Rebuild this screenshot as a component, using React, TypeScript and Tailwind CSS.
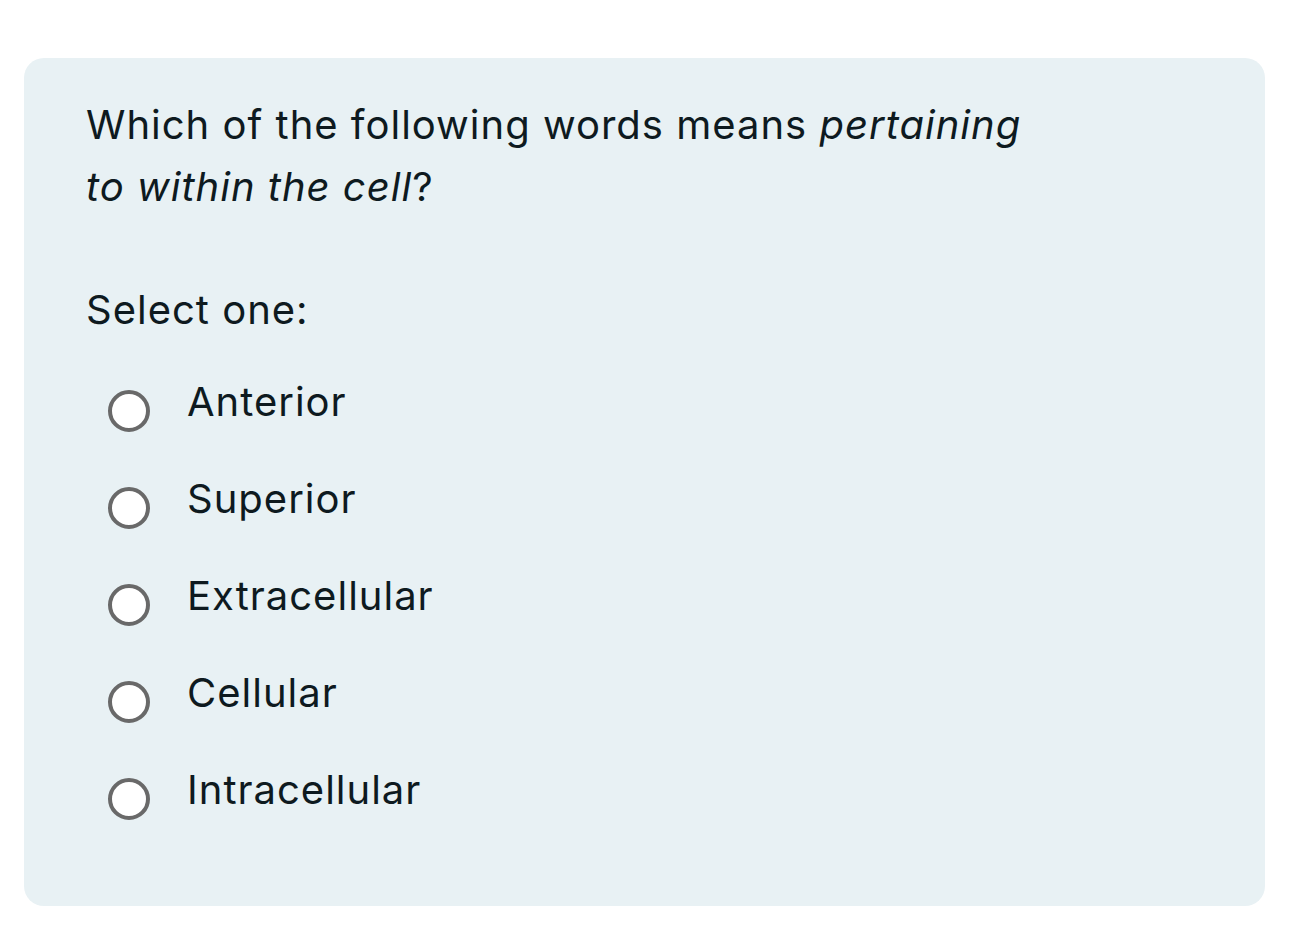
const options = ["Anterior", "Superior", "Extracellular", "Cellular", "Intracellular"];

function Radio() {
  return (
    <span className="mt-[19px] block w-[42px] h-[42px] shrink-0 rounded-full border-[4px] border-[#696969] bg-white" />
  );
}

export default function App() {
  return (
    <div className="min-h-screen bg-white pt-[58px] px-[24px] font-['Inter',sans-serif] text-[#0e1a1f]">
      <div className="w-[1241px] rounded-[20px] bg-[#e8f1f4] pl-[62px] pr-[40px] pt-[36px] pb-[85px]">
        <p className="text-[40px] leading-[62px] tracking-[1px] max-w-[960px]">
          Which of the following words means <em>pertaining to within the cell</em>?
        </p>
        <p className="mt-[61px] text-[40px] leading-[62px] tracking-[1px]">Select one:</p>
        <div className="mt-[30px] flex flex-col gap-[35px]">
          {options.map((o) => (
            <label key={o} className="flex items-start pl-[22px]">
              <Radio />
              <span className="ml-[37px] text-[40px] leading-[62px] tracking-[1px]">{o}</span>
            </label>
          ))}
        </div>
      </div>
    </div>
  );
}
